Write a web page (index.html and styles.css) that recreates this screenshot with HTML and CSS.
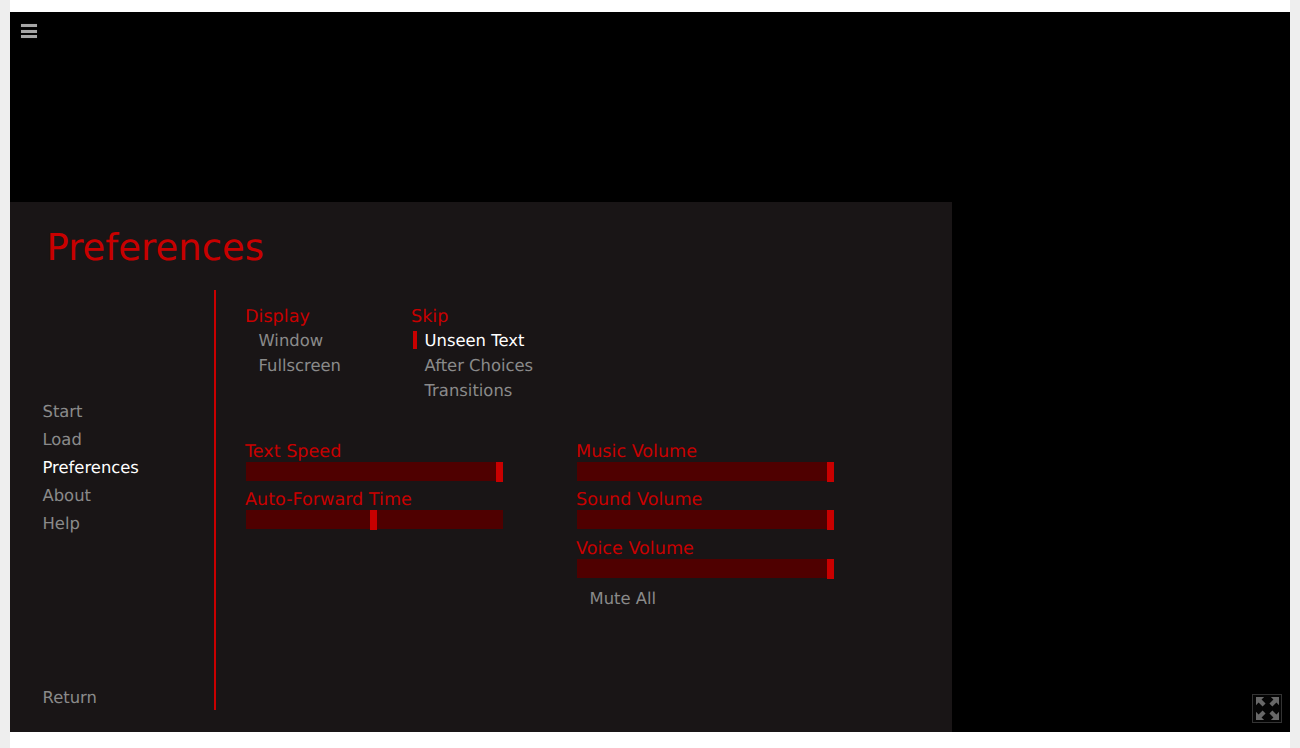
FILE: index.html
```html
<!DOCTYPE html>
<html lang="en">
<head>
<meta charset="utf-8">
<title>Preferences</title>
<link rel="stylesheet" href="styles.css">
</head>
<body>
<div class="page">
  <main class="stage">
    <button class="menu-btn" aria-label="Menu"><span></span><span></span><span></span></button>
    <section class="panel">
      <h1 class="title">Preferences</h1>
      <div class="body">
        <nav class="nav">
          <div class="nav-group">
            <a class="item">Start</a>
            <a class="item">Load</a>
            <a class="item active">Preferences</a>
            <a class="item">About</a>
            <a class="item">Help</a>
          </div>
          <a class="item">Return</a>
        </nav>
        <div class="content">
          <div class="options">
            <div class="opt-group">
              <div class="label">Display</div>
              <div class="opt">Window</div>
              <div class="opt">Fullscreen</div>
            </div>
            <div class="opt-group">
              <div class="label">Skip</div>
              <div class="opt selected">Unseen Text</div>
              <div class="opt">After Choices</div>
              <div class="opt">Transitions</div>
            </div>
          </div>
          <div class="sliders">
            <div class="slider-col">
              <div class="slider">
                <div class="label">Text Speed</div>
                <div class="track"><div class="fill" style="width:100%"><i class="thumb"></i></div></div>
              </div>
              <div class="slider">
                <div class="label">Auto-Forward Time</div>
                <div class="track"><div class="fill" style="width:51%"><i class="thumb"></i></div></div>
              </div>
            </div>
            <div class="slider-col">
              <div class="slider">
                <div class="label">Music Volume</div>
                <div class="track"><div class="fill" style="width:100%"><i class="thumb"></i></div></div>
              </div>
              <div class="slider">
                <div class="label">Sound Volume</div>
                <div class="track"><div class="fill" style="width:100%"><i class="thumb"></i></div></div>
              </div>
              <div class="slider">
                <div class="label">Voice Volume</div>
                <div class="track"><div class="fill" style="width:100%"><i class="thumb"></i></div></div>
              </div>
              <div class="opt mute">Mute All</div>
            </div>
          </div>
        </div>
      </div>
    </section>
    <button class="fs-btn" aria-label="Fullscreen">
      <svg viewBox="0 0 24 24" width="23" height="23">
        <path class="fs-icon" d="M0 0h8.500l-2.700 2.700 4.200 4.200-3.100 3.100-4.200-4.200L0 8.500zM24 0v8.500l-2.700-2.700-4.200 4.200-3.100-3.100 4.200-4.200L15.500 0zM0 24v-8.500l2.700 2.700 4.200-4.200 3.100 3.100-4.200 4.200 2.700 2.700zM24 24h-8.500l2.700-2.700-4.200-4.200 3.100-3.100 4.200 4.200 2.700-2.700z"/>
      </svg>
    </button>
  </main>
</div>
</body>
</html>
```
FILE: styles.css
```css
* { box-sizing: border-box; }
html, body { margin: 0; height: 100%; overflow: hidden; }
body {
  background: #eeeeee;
  font-family: "DejaVu Sans", sans-serif;
  text-rendering: geometricPrecision;
}
.page {
  margin: 0 10px;
  height: 748px;
  padding-top: 12px;
  background: #ffffff;
}
.stage {
  position: relative;
  height: 720px;
  background: #000000;
  display: flex;
  flex-direction: column;
  justify-content: flex-end;
}
.menu-btn {
  position: absolute;
  left: 11px;
  top: 12px;
  width: 16px;
  height: 14px;
  padding: 0;
  border: 0;
  background: none;
  display: flex;
  flex-direction: column;
  justify-content: space-between;
}
.menu-btn span {
  display: block;
  height: 3px;
  background: #a6a6a6;
  box-shadow: 0 0 1px #444;
}
.fs-btn {
  position: absolute;
  right: 8px;
  bottom: 9px;
  width: 30px;
  height: 29px;
  padding: 2px;
  border: 1px solid #333333;
  background: #050505;
  display: flex;
  align-items: center;
  justify-content: center;
}
.fs-icon { fill: #686868; }
.panel {
  width: 942px;
  height: 530px;
  background: #191516;
  padding-bottom: 22px;
  display: flex;
  flex-direction: column;
}
.title {
  margin: 0;
  height: 88px;
  padding: 23.500px 0 0 36.500px;
  font-size: 37px;
  font-weight: 400;
  line-height: 43px;
  color: #c80000;
}
.body {
  flex: 1;
  display: flex;
  min-height: 0;
}
.nav {
  width: 206px;
  border-right: 2px solid #c80000;
  padding: 108px 0 0 32.500px;
  display: flex;
  flex-direction: column;
  justify-content: space-between;
}
.nav > .item { margin-bottom: -2px; }
.item {
  display: block;
  height: 28px;
  line-height: 28px;
  font-size: 16.400px;
  color: #8a8a8a;
}
.item.active { color: #ffffff; }
.content {
  padding: 14px 0 0 29px;
}
.options {
  display: flex;
  gap: 70px;
}
.opt-group { min-width: 96px; }
.label {
  height: 25px;
  line-height: 26px;
  font-size: 17.600px;
  color: #c80000;
}
.opt {
  position: relative;
  height: 25px;
  line-height: 23px;
  padding-left: 13.500px;
  font-size: 16.400px;
  color: #8a8a8a;
}
.opt.selected { color: #ffffff; }
.opt.selected::before {
  content: "";
  position: absolute;
  left: 2px;
  top: 2px;
  width: 4px;
  height: 18px;
  background: #c80000;
}
.sliders {
  display: flex;
  gap: 74px;
  margin-top: 34px;
}
.slider-col { width: 257px; }
.slider {
  height: 48.400px;
}
.slider .label {
  height: 24px;
  line-height: 29px;
}
.track {
  height: 19px;
  margin-left: 1px;
  margin-right: -1px;
  width: 257px;
  background: #4f0000;
}
.fill {
  position: relative;
  height: 100%;
}
.thumb {
  position: absolute;
  right: 0;
  top: 0;
  width: 7px;
  height: 20px;
  background: #c80000;
}
.mute {
  margin-top: 4px;
}
```
